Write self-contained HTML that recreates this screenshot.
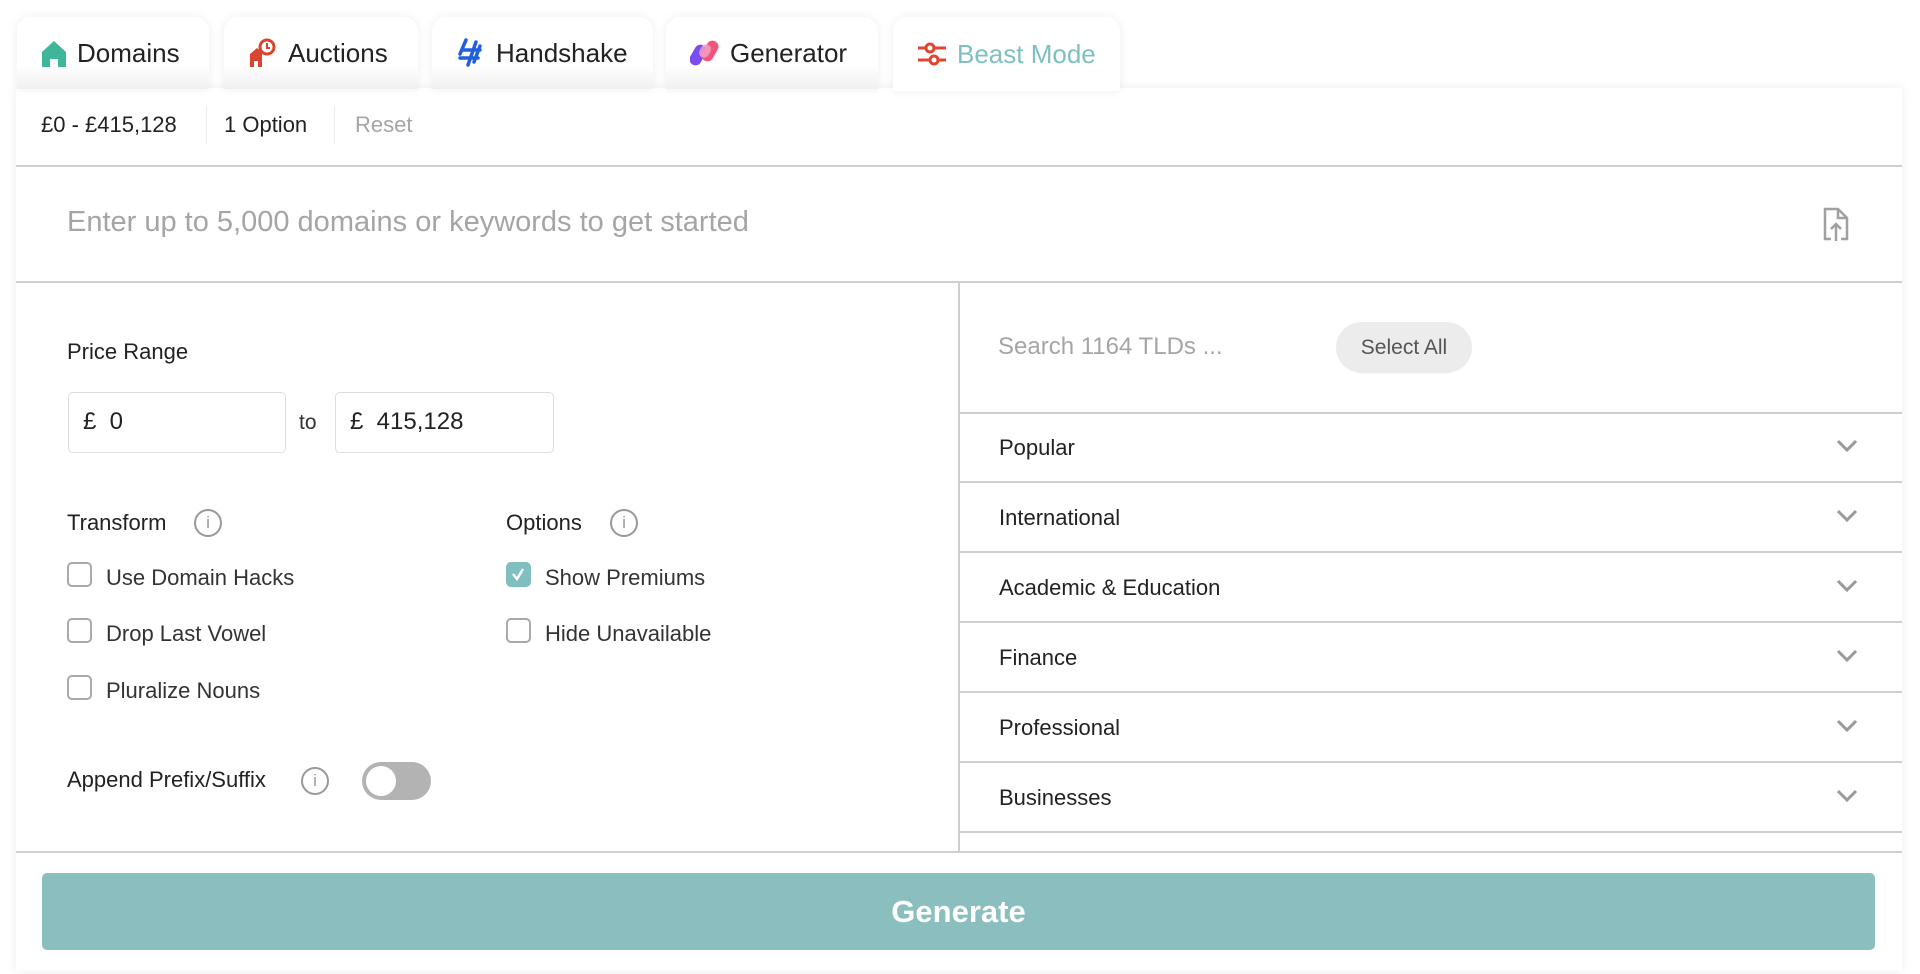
<!DOCTYPE html>
<html><head><meta charset="utf-8"><style>
*{box-sizing:border-box;margin:0;padding:0}
body{width:1920px;height:974px;background:#fff;font-family:"Liberation Sans",sans-serif;color:#222;position:relative;overflow:hidden}
.abs{position:absolute}
.tab{position:absolute;top:17px;height:72px;border-radius:14px 14px 0 0;background:#fff;box-shadow:0 0 10px rgba(0,0,0,.07);font-size:26px;display:flex;align-items:center;padding-left:24px;gap:10px;color:#222}
.tab.in{background:linear-gradient(#fff 0,#fff 68%,#f0f0f0 100%)}
.panel{position:absolute;left:16px;top:88px;width:1886px;height:883px;background:#fff;box-shadow:0 0 10px rgba(0,0,0,.08)}
.hl{position:absolute;height:2px;background:#cfcfcf}
.lbl{position:absolute;font-size:22px;color:#222}
.cb{position:absolute;width:25px;height:25px;border:2px solid #a9a9a9;border-radius:5px;background:#fff}
.cbt{position:absolute;font-size:22px;color:#333}
.info{position:absolute;width:28px;height:28px;border:2px solid #999;border-radius:50%;color:#999;font-size:17px;text-align:center;line-height:24px}
.row{position:absolute;left:959px;width:943px;height:70px;border-bottom:2px solid #cfcfcf}
.row span{position:absolute;left:40px;top:22px;font-size:22px;color:#222}
.chev{position:absolute;left:877px;top:26px}
</style></head><body>
<div class="panel"></div>
<div class="tab in" style="left:17px;width:192px">
<svg width="26" height="28" viewBox="0 0 26 28"><path d="M13 2 L25 13 V28 H17 V20 H9 V28 H1 V13 Z" fill="#3fb59a"/></svg>Domains</div>
<div class="tab in" style="left:224px;width:194px">
<svg width="30" height="30" viewBox="0 0 30 30"><circle cx="19" cy="9" r="7" fill="none" stroke="#d9452f" stroke-width="3"/><path d="M19 5v5h3" stroke="#d9452f" stroke-width="2" fill="none"/><path d="M2 16 L9 10 L14 14 V29 H10 V23 H6 V29 H2 Z" fill="#d9452f"/></svg>Auctions</div>
<div class="tab in" style="left:432px;width:221px">
<svg width="30" height="30" viewBox="0 0 30 30"><path d="M10 2 L4 16 M20 4 L12 27 M6 12 H24 M4 20 H22 M24 8 L18 24" stroke="#1f5fe0" stroke-width="3.5" fill="none" stroke-linecap="round"/></svg>Handshake</div>
<div class="tab in" style="left:666px;width:212px">
<svg width="30" height="30" viewBox="0 0 30 30"><rect x="2" y="6" width="12" height="22" rx="6" transform="rotate(30 8 17)" fill="#7b4cf0"/><rect x="14" y="2" width="12" height="22" rx="6" transform="rotate(30 20 13)" fill="#f0567a"/><rect x="10" y="6" width="10" height="14" rx="5" transform="rotate(30 15 13)" fill="#f6a3c8" opacity=".8"/></svg>Generator</div>
<div class="tab" style="left:893px;width:227px;height:74px;color:#7fbfbf">
<svg width="30" height="28" viewBox="0 0 30 28"><g stroke="#e0452e" stroke-width="3" fill="none"><path d="M1 8h8M17 8h12M1 20h12M21 20h8"/><circle cx="13" cy="8" r="4"/><circle cx="17" cy="20" r="4"/></g></svg>Beast Mode</div>

<div class="abs" style="left:41px;top:112px;font-size:22px;color:#222">£0 - £415,128</div>
<div class="abs" style="left:206px;top:106px;width:1px;height:38px;background:#ececec"></div>
<div class="abs" style="left:224px;top:112px;font-size:22px;color:#222">1 Option</div>
<div class="abs" style="left:334px;top:106px;width:1px;height:38px;background:#ececec"></div>
<div class="abs" style="left:355px;top:112px;font-size:22px;color:#a5a5a5">Reset</div>
<div class="hl" style="left:16px;top:165px;width:1886px"></div>

<div class="abs" style="left:67px;top:206px;font-size:29px;color:#a5a5a5">Enter up to 5,000 domains or keywords to get started</div>
<svg class="abs" style="left:1822px;top:207px" width="28" height="34" viewBox="0 0 28 34"><g fill="none" stroke="#a0a0a0" stroke-width="2.5"><path d="M9 32H3V2H16L25 11V32H19M16 2V11H25"/><path d="M14 34V17M9 22L14 17L19 22"/></g></svg>
<div class="hl" style="left:16px;top:281px;width:1886px"></div>
<div class="abs" style="left:958px;top:282px;width:2px;height:569px;background:#cfcfcf"></div>

<div class="lbl" style="left:67px;top:339px">Price Range</div>
<div class="abs" style="left:68px;top:392px;width:218px;height:61px;border:1.5px solid #ddd;border-radius:5px;font-size:24px;padding:15px 0 0 14px">£&nbsp; 0</div>
<div class="abs" style="left:299px;top:411px;font-size:21px;color:#333">to</div>
<div class="abs" style="left:335px;top:392px;width:219px;height:61px;border:1.5px solid #ddd;border-radius:5px;font-size:24px;padding:15px 0 0 14px">£&nbsp; 415,128</div>

<div class="lbl" style="left:67px;top:510px">Transform</div>
<div class="info" style="left:194px;top:509px">i</div>
<div class="lbl" style="left:506px;top:510px">Options</div>
<div class="info" style="left:610px;top:509px">i</div>

<div class="cb" style="left:67px;top:562px"></div><div class="cbt" style="left:106px;top:565px">Use Domain Hacks</div>
<div class="cb" style="left:67px;top:618px"></div><div class="cbt" style="left:106px;top:621px">Drop Last Vowel</div>
<div class="cb" style="left:67px;top:675px"></div><div class="cbt" style="left:106px;top:678px">Pluralize Nouns</div>
<div class="cb" style="left:506px;top:562px;background:#7fbfbf;border-color:#7fbfbf"><svg width="21" height="21" viewBox="0 0 21 21" style="position:absolute;left:0;top:0"><path d="M5 10l4 5 6-10" stroke="#fff" stroke-width="2.5" fill="none"/></svg></div><div class="cbt" style="left:545px;top:565px">Show Premiums</div>
<div class="cb" style="left:506px;top:618px"></div><div class="cbt" style="left:545px;top:621px">Hide Unavailable</div>

<div class="lbl" style="left:67px;top:767px">Append Prefix/Suffix</div>
<div class="info" style="left:301px;top:767px">i</div>
<div class="abs" style="left:362px;top:762px;width:69px;height:38px;border-radius:19px;background:#b3b3b3"><div style="position:absolute;left:4px;top:4px;width:30px;height:30px;border-radius:50%;background:#fff"></div></div>

<div class="abs" style="left:998px;top:333px;font-size:24px;color:#a5a5a5">Search 1164 TLDs ...</div>
<div class="abs" style="left:1336px;top:322px;width:136px;height:51px;border-radius:26px;background:#ececec;font-size:21px;color:#555;text-align:center;line-height:51px">Select All</div>
<div class="hl" style="left:959px;top:412px;width:943px"></div>

<div class="row" style="top:413px"><span>Popular</span><svg class="chev" width="22" height="14" viewBox="0 0 22 14"><path d="M2 2l9 9 9-9" stroke="#999" stroke-width="3" fill="none"/></svg></div>
<div class="row" style="top:483px"><span>International</span><svg class="chev" width="22" height="14" viewBox="0 0 22 14"><path d="M2 2l9 9 9-9" stroke="#999" stroke-width="3" fill="none"/></svg></div>
<div class="row" style="top:553px"><span>Academic &amp; Education</span><svg class="chev" width="22" height="14" viewBox="0 0 22 14"><path d="M2 2l9 9 9-9" stroke="#999" stroke-width="3" fill="none"/></svg></div>
<div class="row" style="top:623px"><span>Finance</span><svg class="chev" width="22" height="14" viewBox="0 0 22 14"><path d="M2 2l9 9 9-9" stroke="#999" stroke-width="3" fill="none"/></svg></div>
<div class="row" style="top:693px"><span>Professional</span><svg class="chev" width="22" height="14" viewBox="0 0 22 14"><path d="M2 2l9 9 9-9" stroke="#999" stroke-width="3" fill="none"/></svg></div>
<div class="row" style="top:763px"><span>Businesses</span><svg class="chev" width="22" height="14" viewBox="0 0 22 14"><path d="M2 2l9 9 9-9" stroke="#999" stroke-width="3" fill="none"/></svg></div>

<div class="hl" style="left:16px;top:851px;width:1886px"></div>
<div class="abs" style="left:42px;top:873px;width:1833px;height:77px;border-radius:5px;background:#8bbfbf;color:#fff;font-size:31px;font-weight:bold;text-align:center;line-height:77px">Generate</div>
</body></html>
